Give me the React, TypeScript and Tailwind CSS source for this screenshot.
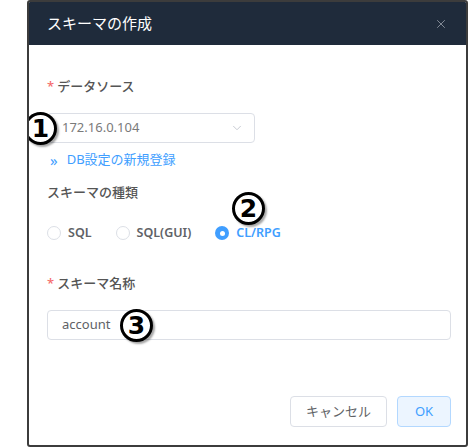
import React from 'react';
import { ChevronDown, X } from 'lucide-react';

const font = { fontFamily: '"Noto Sans", "Noto Sans CJK JP", sans-serif' };

// circled annotation marks drawn over the form
const Mark = ({ n, className }: { n: string; className: string }) => (
  <div
    className={`absolute flex h-[33px] w-[33px] items-center justify-center rounded-full border-[3px] border-black bg-white text-[25px] leading-none font-black text-black shadow-[2px_2px_2px_rgba(0,0,0,0.35)] ${className}`}
    style={{ fontFamily: '"DejaVu Sans", sans-serif' }}
  >
    {n}
  </div>
);

const Radio = ({ label, checked = false }: { label: string; checked?: boolean }) => (
  <label className="flex items-center gap-[7px]">
    {checked ? (
      <span className="flex h-[14px] w-[14px] items-center justify-center rounded-full bg-[#409eff]">
        <span className="h-[5px] w-[5px] rounded-full bg-white" />
      </span>
    ) : (
      <span className="h-[14px] w-[14px] rounded-full border border-[#dcdfe6] bg-white" />
    )}
    <span className={`text-[12.5px] font-semibold ${checked ? 'text-[#409eff]' : 'text-[#606266]'}`}>{label}</span>
  </label>
);

export default function App() {
  return (
    <div className="h-[447px] w-[471px] bg-white pl-[27px]" style={font}>
      <div className="relative flex h-[447px] w-[441px] flex-col overflow-hidden rounded-[3px] border-2 border-[#3c3c3c] bg-white">
        {/* Header */}
        <div className="flex h-[43px] shrink-0 items-center justify-between bg-[#1f2b3b] pl-[18px] pr-[18px]">
          <h1 className="text-[15px] text-white">スキーマの作成</h1>
          <X className="h-[14px] w-[14px] text-[#8a919c]" strokeWidth={1.6} />
        </div>

        {/* Body */}
        <div className="flex flex-1 flex-col pl-[18px] pr-[15px]">
          <div className="mt-[32px] flex h-[20px] items-center text-[13px] font-medium text-[#555]">
            <span className="mr-[3px] text-[#f56c6c]">*</span>データソース
          </div>

          <div className="mt-[16px] flex h-[30px] w-[208px] items-center justify-between rounded-[4px] border border-[#dcdfe6] pl-[14px] pr-[10px]">
            <span className="text-[13px] text-[#7a7a7a]">172.16.0.104</span>
            <ChevronDown className="h-[14px] w-[14px] text-[#c0c4cc]" strokeWidth={1.5} />
          </div>

          <a className="mt-[7px] flex h-[20px] items-center gap-[9px] pl-[3px] text-[13px] text-[#409eff]">
            <span className="text-[15px] leading-none">»</span>
            <span>DB設定の新規登録</span>
          </a>

          <div className="mt-[13px] flex h-[20px] items-center text-[13px] font-medium text-[#555]">スキーマの種類</div>

          <div className="mt-[20px] flex h-[20px] items-center gap-[24px]">
            <Radio label="SQL" />
            <Radio label="SQL(GUI)" />
            <Radio label="CL/RPG" checked />
          </div>

          <div className="mt-[31px] flex h-[20px] items-center text-[13px] font-medium text-[#555]">
            <span className="mr-[3px] text-[#f56c6c]">*</span>スキーマ名称
          </div>

          <div className="mt-[16px] flex h-[30px] items-center rounded-[4px] border border-[#dcdfe6] pl-[14px]">
            <span className="text-[13px] text-[#606266]">account</span>
          </div>

          <div className="mt-[56px] flex justify-end gap-[10px]">
            <button className="h-[31px] w-[97px] rounded-[4px] border border-[#dcdfe6] bg-white text-[13px] text-[#606266]">
              キャンセル
            </button>
            <button className="h-[31px] w-[54px] rounded-[4px] border border-[#b3d8ff] bg-[#ecf5ff] text-[13px] text-[#409eff]">
              OK
            </button>
          </div>
        </div>

        <Mark n="1" className="left-[-5px] top-[110px]" />
        <Mark n="2" className="left-[203px] top-[190px]" />
        <Mark n="3" className="left-[91px] top-[307px]" />
      </div>
    </div>
  );
}
